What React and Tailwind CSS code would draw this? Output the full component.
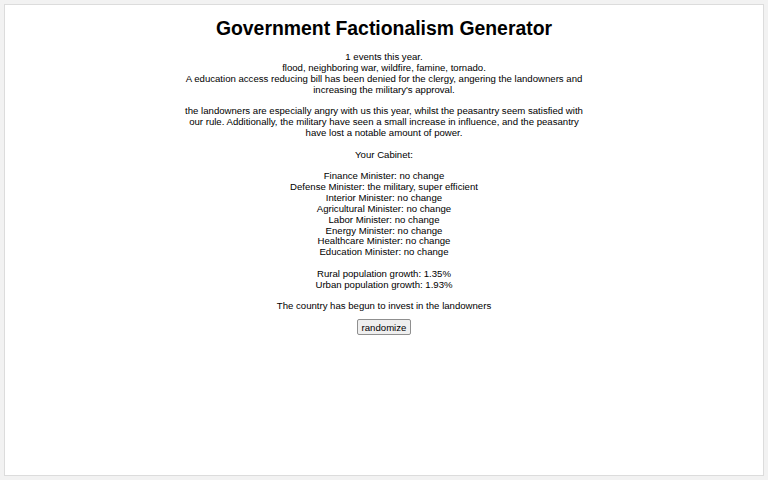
import React from 'react';

const cabinet = [
  ['Finance Minister', 'no change'],
  ['Defense Minister', 'the military, super efficient'],
  ['Interior Minister', 'no change'],
  ['Agricultural Minister', 'no change'],
  ['Labor Minister', 'no change'],
  ['Energy Minister', 'no change'],
  ['Healthcare Minister', 'no change'],
  ['Education Minister', 'no change'],
];

export default function App() {
  return (
    <div className="h-[480px] w-full bg-[#f2f2f2] p-[4px] font-['Liberation_Sans',Arial,sans-serif] text-black">
      <div className="h-full border border-[#dcdcdc] bg-white flex flex-col items-center">
        <h1 className="mt-[12px] text-[19.4px] leading-[22px] font-bold">Government Factionalism Generator</h1>
        <div className="mt-[13px] w-[402px] text-center text-[9.6px] leading-[10.85px]">
          <div>1 events this year.</div>
          <div>flood, neighboring war, wildfire, famine, tornado.</div>
          <div>
            A education access reducing bill has been denied for the clergy, angering the landowners and increasing the
            military's approval.
          </div>
          <br />
          <div>
            the landowners are especially angry with us this year, whilst the peasantry seem satisfied with our rule.
            Additionally, the military have seen a small increase in influence, and the peasantry have lost a notable
            amount of power.
          </div>
          <br />
          <div>Your Cabinet:</div>
          <br />
          {cabinet.map(([role, pick]) => (
            <div key={role}>
              {role}: {pick}
            </div>
          ))}
          <br />
          <div>Rural population growth: 1.35%</div>
          <div>Urban population growth: 1.93%</div>
          <p className="mt-[10px]">The country has begun to invest in the landowners</p>
          <button className="mt-[8px] h-[16px] px-[4px] text-[9.6px] leading-none bg-[#efefef] border border-[#8f8f8f] rounded-[2px]">
            randomize
          </button>
        </div>
      </div>
    </div>
  );
}
